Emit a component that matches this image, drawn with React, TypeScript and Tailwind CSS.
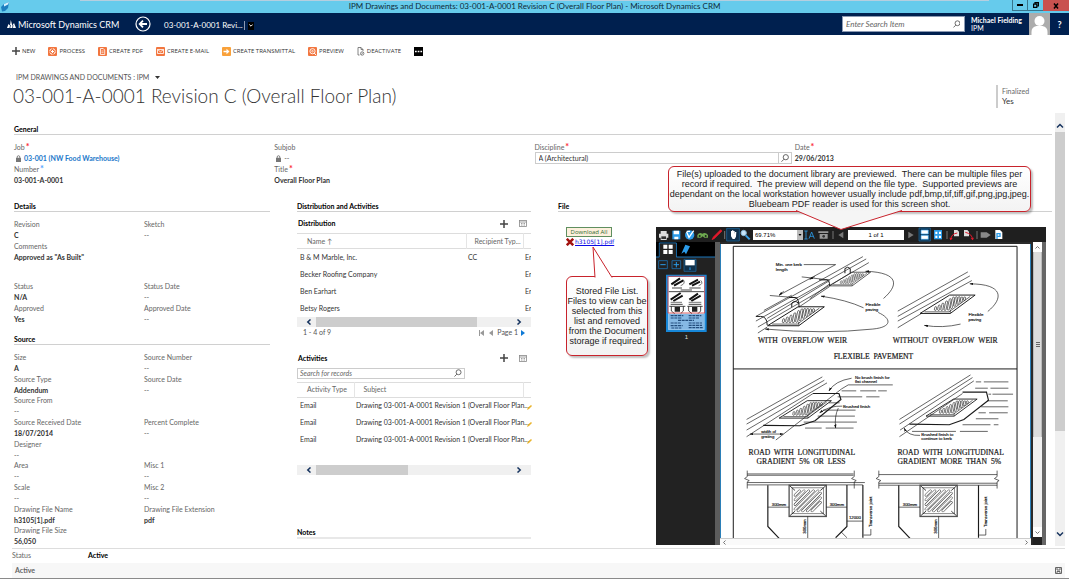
import type { ReactNode } from 'react'

type Field = { label: string; value: string; required?: 'red' | 'blue' } | null

const Icons = {
  plus: (
    <svg width="8" height="8" viewBox="0 0 8 8" stroke="#444" strokeWidth="1.5">
      <path d="M4 0v8M0 4h8" />
    </svg>
  ),
  process: (
    <svg width="9" height="9" viewBox="0 0 9 9">
      <rect width="9" height="9" rx="1" fill="#f2763f" />
      <circle cx="4.5" cy="4.5" r="2.8" fill="none" stroke="#fff" strokeWidth="1" strokeDasharray="3.2 1.2" />
      <path d="M4.5 3v3M3 4.5h3" stroke="#fff" strokeWidth="1" />
    </svg>
  ),
  pdf: (
    <svg width="9" height="9" viewBox="0 0 9 9" fill="none">
      <rect width="9" height="9" rx="1" fill="#f2763f" />
      <path d="M2.5 1.5h2.7l1.5 1.5v4.5h-4.2z" stroke="#fff" strokeWidth=".8" />
      <path d="M3.5 4h2M3.5 5.7h2" stroke="#fff" strokeWidth=".7" />
    </svg>
  ),
  mail: (
    <svg width="9" height="9" viewBox="0 0 9 9" fill="none">
      <rect width="9" height="9" rx="1" fill="#f2763f" />
      <path d="M1.5 2.5h6v4h-6zl3 2.4 3-2.4" stroke="#fff" strokeWidth=".8" />
    </svg>
  ),
  transmittal: (
    <svg width="9" height="9" viewBox="0 0 9 9">
      <rect width="9" height="9" rx="1" fill="#f9a13a" />
      <path d="M1.5 3.7h3v-2l3 2.8-3 2.8v-2h-3z" fill="#fff" />
    </svg>
  ),
  preview: (
    <svg width="9" height="9" viewBox="0 0 9 9" fill="none" stroke="#fff">
      <rect width="9" height="9" rx="1" fill="#f2763f" stroke="none" />
      <circle cx="4.5" cy="4.2" r="2.6" strokeWidth=".9" />
      <circle cx="4.5" cy="4.2" r=".8" strokeWidth=".7" />
      <path d="M6.2 6l2 2.2" strokeWidth="1" />
    </svg>
  ),
  deactivate: (
    <svg width="8" height="9" viewBox="0 0 8 9" fill="none" stroke="#666" strokeWidth=".8">
      <path d="M2.5 8h-1.5v-7.5h3l2 2v1.5" />
      <path d="M4 .5v2h2" />
      <circle cx="5.2" cy="6.5" r="1.7" />
      <path d="M4 7.7l2.4-2.4" />
    </svg>
  ),
  more: (
    <svg width="9" height="9" viewBox="0 0 9 9">
      <rect width="9" height="9" />
      <path d="M1 4.5h1.7M3.7 4.5h1.7M6.4 4.5h1.7" stroke="#fff" strokeWidth="1.7" />
    </svg>
  ),
  search: (
    <svg width="8" height="8" viewBox="0 0 8 8" fill="none" stroke="#555" strokeWidth=".9">
      <circle cx="4.8" cy="3.2" r="2.6" />
      <path d="M3 5.2L.5 7.7" />
    </svg>
  ),
  lock: (
    <svg width="5" height="7" viewBox="0 0 5 7">
      <path d="M1.2 3v-1a1.3 1.3 0 0 1 2.6 0v1" fill="none" stroke="#777" strokeWidth=".9" />
      <rect y="2.8" width="5" height="4.2" fill="#777" />
    </svg>
  ),
  grid: (
    <svg width="8" height="7" viewBox="0 0 8 7" fill="none" stroke="#888" strokeWidth=".8">
      <rect x=".5" y=".5" width="7" height="6" />
      <path d="M.5 2h7M2 3.5h1.5M4.5 3.5h1.5M2 5h1.5M4.5 5h1.5" />
    </svg>
  ),
  left: (
    <svg width="6" height="6" viewBox="0 0 6 6" fill="none" stroke="#17345f" strokeWidth="1.5">
      <path d="M4.5.5L1.8 3l2.7 2.5" />
    </svg>
  ),
  right: (
    <svg width="6" height="6" viewBox="0 0 6 6" fill="none" stroke="#17345f" strokeWidth="1.5">
      <path d="M1.5.5L4.2 3 1.5 5.5" />
    </svg>
  ),
  up: (
    <svg width="8" height="6" viewBox="0 0 8 6" fill="none" stroke="#17345f" strokeWidth="1.5">
      <path d="M1 4.5l3-3 3 3" />
    </svg>
  ),
  down: (
    <svg width="8" height="6" viewBox="0 0 8 6" fill="none" stroke="#17345f" strokeWidth="1.5">
      <path d="M1 1.5l3 3 3-3" />
    </svg>
  ),
  pencil: (
    <svg width="5" height="5" viewBox="0 0 5 5">
      <path d="M0 5l.8-2.3L4 0l1 1-3 3z" fill="#eab42c" />
    </svg>
  ),
}

const commands: Array<{ label: string; icon: ReactNode }> = [
  { label: 'NEW', icon: Icons.plus },
  { label: 'PROCESS', icon: Icons.process },
  { label: 'CREATE PDF', icon: Icons.pdf },
  { label: 'CREATE E-MAIL', icon: Icons.mail },
  { label: 'CREATE TRANSMITTAL', icon: Icons.transmittal },
  { label: 'PREVIEW', icon: Icons.preview },
  { label: 'DEACTIVATE', icon: Icons.deactivate },
]

const detailsTop: Field[] = [{ label: 'Revision', value: 'C' }, { label: 'Sketch', value: '--' }, { label: 'Comments', value: 'Approved as "As Built"' }, null]

const detailsBottom: Field[] = [
  { label: 'Status', value: 'N/A' },
  { label: 'Status Date', value: '--' },
  { label: 'Approved', value: 'Yes' },
  { label: 'Approved Date', value: '--' },
]

const source: Field[] = [
  { label: 'Size', value: 'A' },
  { label: 'Source Number', value: '--' },
  { label: 'Source Type', value: 'Addendum' },
  { label: 'Source Date', value: '--' },
  { label: 'Source From', value: '--' },
  null,
  { label: 'Source Received Date', value: '18/07/2014' },
  { label: 'Percent Complete', value: '--' },
  { label: 'Designer', value: '--' },
  null,
  { label: 'Area', value: '--' },
  { label: 'Misc 1', value: '--' },
  { label: 'Scale', value: '--' },
  { label: 'Misc 2', value: '--' },
  { label: 'Drawing File Name', value: 'h3105[1].pdf' },
  { label: 'Drawing File Extension', value: 'pdf' },
  { label: 'Drawing File Size', value: '56,050' },
]

const recipients = [
  { name: 'B & M Marble, Inc.', type: 'CC' },
  { name: 'Becker Roofing Company', type: '' },
  { name: 'Ben Earhart', type: '' },
  { name: 'Betsy Rogers', type: '' },
]

const activities = [1, 2, 3]

function Required({ color }: { color?: 'red' | 'blue' }) {
  if (!color) return null
  return <span className={`ml-px h-[8px] text-[9px] font-bold leading-[9px] ${color === 'red' ? 'text-red-500' : 'text-blue-400'}`}>*</span>
}

function FieldView({ field, icon, link }: { field: Field; icon?: ReactNode; link?: boolean }) {
  if (!field) return <div />
  const empty = field.value === '--'
  return (
    <dl className="whitespace-nowrap leading-[11px]">
      <dt className="flex h-[11px] text-[#666]">
        {field.label}
        <Required color={field.required} />
      </dt>
      <dd className={`flex h-[11px] items-center gap-[3px] ${empty ? 'text-[#555]' : 'font-bold text-[#333]'}`}>
        {icon && <span className="ml-[2px]">{icon}</span>}
        {link ? <a href="#job" className="text-[#2277c9]">{field.value}</a> : field.value}
      </dd>
    </dl>
  )
}

function SectionTitle({ children }: { children: ReactNode }) {
  return <h2 className="h-[12px] border-b border-[#d0d0d0] font-bold leading-[13px] text-black">{children}</h2>
}

function GridTitle({ children }: { children: string }) {
  return (
    <div className="flex h-[21px] items-center pl-px pt-[2px]">
      <h3 className="flex-1 font-bold text-black">{children}</h3>
      <button aria-label={`Add ${children}`} className="mr-[11px]">{Icons.plus}</button>
      <button aria-label={`Open ${children} list`} className="mr-[4px]">{Icons.grid}</button>
    </div>
  )
}

function HorizontalScroll({ thumb }: { thumb: string }) {
  return (
    <div className="flex h-[10px] items-center bg-[#f0f0f0]">
      <span className="flex w-[19px] justify-center pl-[5px]">{Icons.left}</span>
      <span className={`h-full bg-[#cdcdcd] ${thumb}`} />
      <span className="flex flex-1 justify-end pr-[9px]">{Icons.right}</span>
    </div>
  )
}

function TitleBar() {
  return (
    <header className="flex h-[13px] items-center bg-[#66cbec] text-[8px] leading-[11px] text-[#0f2a38]">
      <svg width="12" height="11" viewBox="0 0 12 11" className="w-[80px]" preserveAspectRatio="xMinYMid">
        <path d="M1 6l3-3 5-2-1 6-3 3-3 .5z" fill="#1d7fc0" />
        <path d="M4 3l5-2-1 2.5-4 2z" fill="#d6f1ff" />
      </svg>
      <p className="h-full flex-1 border-t border-[#b5cfe0] text-center">
        IPM Drawings and Documents: 03-001-A-0001 Revision C (Overall Floor Plan) - Microsoft Dynamics CRM
      </p>
      <div className="flex self-start">
        <span className="w-[23px]" />
        <button aria-label="Minimize" className="flex h-[11px] w-[16px] items-center justify-center border border-t-0 border-[#38758c]">
          <span className="h-[2px] w-[6px] bg-black" />
        </button>
        <button aria-label="Restore" className="flex h-[11px] w-[15px] items-center justify-center border-b border-[#38758c]">
          <svg width="6" height="6" viewBox="0 0 6 6" fill="none" stroke="#000" strokeWidth="1.2">
            <path d="M.6 2.2h3.2v3.2H.6zM2 2V.6h3.4v3.4H4" />
          </svg>
        </button>
        <button aria-label="Close" className="flex h-[11px] w-[26px] items-center justify-center bg-[#c9514f]">
          <svg width="6" height="6" viewBox="0 0 6 6" stroke="#000" strokeWidth="1.5">
            <path d="M1 .5l4 5M5 .5l-4 5" />
          </svg>
        </button>
      </div>
    </header>
  )
}

function NavBar() {
  return (
    <nav className="flex h-[22px] items-center bg-[#00204f] pl-[7px] text-white">
      <svg width="9" height="8" viewBox="0 0 9 8" fill="#fff">
        <path d="M0 8l1.5-4 1.5 1.5.8-5.5 1.5 5.5L7 3l2 5z" />
        <path d="M2.8 8l.8-3M5.5 8l.5-3" stroke="#00204f" strokeWidth=".7" />
      </svg>
      <span className="ml-[2px] w-[117px] text-[9px]">Microsoft Dynamics CRM</span>
      <button aria-label="Back">
        <svg width="16" height="16" viewBox="0 0 16 16" fill="none" stroke="#fff">
          <circle cx="8" cy="8" r="7" strokeWidth="1.2" />
          <path d="M12 8H5M8 4.7L4.7 8 8 11.3" strokeWidth="1.8" />
        </svg>
      </button>
      <span className="ml-[13px] w-[80px] whitespace-nowrap pt-[2px] text-[8px]">03-001-A-0001 Revi...</span>
      <span className="mt-[3px] h-[9px] w-px bg-[#8c9ab3]" />
      <button aria-label="Records" className="ml-[3px] mt-[3px] flex h-[8px] w-[6px] items-center justify-center bg-black">
        <svg width="4" height="3" viewBox="0 0 4 3" fill="none" stroke="#fff"><path d="M.3.5L2 2.2 3.7.5" /></svg>
      </button>
      <div className="ml-auto flex h-[16px] w-[123px] items-center border border-[#8c9ab3] bg-white pr-[4px]">
        <input aria-label="Enter Search Item" placeholder="Enter Search Item" className="w-full min-w-0 pl-[3px] text-[8px] italic outline-none placeholder:text-[#666]" />
        {Icons.search}
      </div>
      <div className="ml-[6px] w-[58px] leading-[8px]">
        <p className="font-bold">Michael Fielding</p>
        <p>IPM</p>
      </div>
      <svg width="21" height="22" viewBox="0 0 21 22">
        <rect width="21" height="22" fill="#acacac" />
        <circle cx="10.5" cy="8" r="5" fill="#fff" />
        <path d="M2.5 22v-3q0-5 5-6h6q5 1 5 6v3z" fill="#fff" />
      </svg>
      <button aria-label="Help" className="w-[19px] text-center text-[9px] font-bold">?</button>
    </nav>
  )
}

function Distribution() {
  return (
    <section>
      <GridTitle>Distribution</GridTitle>
      <table className="w-full table-fixed border-collapse whitespace-nowrap text-left text-[#333]">
        <thead>
          <tr className="h-[15px] border-y border-[#ddd] text-[#666]">
            <th className="pl-[10px] font-normal">Name ↑</th>
            <th className="w-[57px] border-x border-[#e5e5e5] pl-[8px] font-normal">Recipient Typ...</th>
            <th className="w-[8px]" aria-label="Method" />
          </tr>
        </thead>
        <tbody>
          {recipients.map(({ name, type }) => (
            <tr key={name} className="h-[17px]">
              <td className="pl-[3px]">{name}</td>
              <td className="pl-[2px]">{type}</td>
              <td className="overflow-hidden pl-[2px]">Er</td>
            </tr>
          ))}
        </tbody>
      </table>
      <HorizontalScroll thumb="w-[161px]" />
      <div className="flex h-[12px] items-center pl-[6px] pr-[6px] text-[#555]">
        <span className="flex-1">1 - 4 of 9</span>
        <span className="flex items-center gap-[3px]">
          <svg width="16" height="6" viewBox="0 0 16 6" fill="#999">
            <path d="M1 0h1v6h-1zM6 0v6l-4-3zM15 0v6l-4-3z" />
          </svg>
          Page 1
          <svg width="4" height="6" viewBox="0 0 4 6" fill="#0f7ad6"><path d="M0 0v6l4-3z" /></svg>
        </span>
      </div>
    </section>
  )
}

function Activities() {
  return (
    <section className="mt-[8px]">
      <GridTitle>Activities</GridTitle>
      <div className="flex h-[11px] w-[168px] items-center border border-[#ccc] pr-[2px]">
        <input aria-label="Search for records" placeholder="Search for records" className="w-full min-w-0 pl-[2px] italic outline-none placeholder:text-[#666]" />
        {Icons.search}
      </div>
      <table className="mt-[3px] w-full table-fixed border-collapse whitespace-nowrap text-left text-[#333]">
        <thead>
          <tr className="h-[15px] border-y border-[#ddd] text-[#666]">
            <th className="w-[57px] border-r border-[#e5e5e5] pl-[10px] font-normal">Activity Type</th>
            <th className="border-r border-[#e5e5e5] pl-[9px] font-normal">Subject</th>
            <th className="w-[8px]" aria-label="Edit" />
          </tr>
        </thead>
        <tbody>
          {activities.map(id => (
            <tr key={id} className="h-[17px]">
              <td className="pl-[3px]">Email</td>
              <td className="pl-[2px]">Drawing 03-001-A-0001 Revision 1 (Overall Floor Plan...</td>
              <td className="pl-[4px] pt-[4px]">{Icons.pencil}</td>
            </tr>
          ))}
        </tbody>
      </table>
      <div className="mt-[17px]">
        <HorizontalScroll thumb="w-[92px]" />
      </div>
    </section>
  )
}

// Slotted kerb grate seen in perspective, origin at its front left corner
function Grate({ x, y, scale = 1 }: { x: number; y: number; scale?: number }) {
  // x, bottom and height of each slot
  const slots = [
    [44, -10, 12],
    [54, -10, 17],
    [64, -10, 23],
    [74, -10, 30],
    [84, -11, 36],
    [94, -16, 36],
    [104, -23, 30],
    [114, -29, 24],
    [124, -35, 17],
    [134, -41, 11],
  ]
  return (
    <g transform={`translate(${x} ${y}) scale(${scale})`}>
      <path d="M0 0H94L171 -57H92z" strokeWidth="3" />
      <path d="M14 -5H90L156 -53M94 0V-12" strokeWidth="2" />
      {slots.map(([sx, sy, h]) => (
        <rect key={sx} x={sx} y={sy - h} width="6" height={h} rx="3" transform={`rotate(12 ${sx} ${sy})`} strokeWidth="1.8" />
      ))}
    </g>
  )
}

// The same grate in plan view, with its gully and joint lines
function PlanGrate({ x }: { x: number }) {
  const slots = [48, 62, 76, 90, 104, 118, 132, 146]
  return (
    <g transform={`translate(${x} 798)`}>
      <rect width="112" height="94" strokeWidth="4" stroke="#555" />
      <rect x="9" y="8" width="94" height="78" strokeWidth="1.5" />
      <path d="M2 2l16 14M110 2L94 16M2 92l16-14M110 92L94 78" strokeWidth="2.5" />
      {slots.map(c => {
        const x1 = Math.max(18, c - 77)
        const x2 = Math.min(94, c - 17)
        return (
          <g key={c} strokeLinecap="round">
            <path d={`M${x1} ${c - x1}L${x2} ${c - x2}`} strokeWidth="8" stroke="#333" />
            <path d={`M${x1} ${c - x1}L${x2} ${c - x2}`} strokeWidth="5" stroke="#fff" />
          </g>
        )
      })}
      <path d="M-64 0V124L-30 160" strokeWidth="3.5" />
      <path d="M-64 66H0M56 94V160" />
    </g>
  )
}

function PageDrawing() {
  return (
    <svg viewBox="-27 72 930 882" preserveAspectRatio="xMinYMin meet" className="block h-[294px] w-full bg-white" fill="none" stroke="#1a1a1a" strokeWidth="2" role="img" aria-label="Kerb grate details">
      <defs>
        <marker id="tip" viewBox="0 0 10 6" refX="9" refY="3" markerWidth="6" markerHeight="4" orient="auto-start-reverse">
          <path d="M0 0l10 3-10 3z" fill="#111" stroke="none" />
        </marker>
      </defs>
      <path d="M10 960V79H864V960M10 448H864" strokeWidth="3" />

      {/* With overflow weir */}
      <path d="M78 290L400 110M78 304L410 117M84 322L418 128M84 340L112 322M207 262L300 200M240 237L300 192M112 296L300 182M102 272L186 226" />
      <path d="M78 290H92Q112 290 112 316M178 233H196Q208 236 208 262M186 262V250Q196 240 206 250M268 180H292Q300 182 300 198M346 160V146Q354 138 362 146V160" strokeWidth="3" />
      <path d="M222 134H318L148 226M120 227L204 234M216 171L298 180" />
      <path d="M148 226L162 214" markerStart="url(#tip)" />
      <path d="M240 178L256 170" markerStart="url(#tip)" />
      <Grate x={113} y={318} />
      <Grate x={300} y={198} scale={0.72} />
      <path d="M462 236C504 200 516 158 408 154" markerEnd="url(#tip)" />
      <path d="M402 264Q350 240 274 229" markerEnd="url(#tip)" />
      <path d="M446 278C486 296 490 322 430 328Q280 344 106 328" markerEnd="url(#tip)" />

      {/* Without overflow weir */}
      <path d="M505 274L716 156M505 290L722 168M505 304L728 182M505 324L578 280" />
      <Grate x={572} y={281} scale={0.97} />
      <path d="M776 275C824 236 824 192 722 192" markerEnd="url(#tip)" />
      <path d="M694 313Q640 326 585 317" markerEnd="url(#tip)" />

      {/* Gradient 5% or less */}
      <path d="M50 600L278 472M50 614L284 482M50 632L292 490M50 652L250 522M138 662L336 508L356 496H490" />
      <path d="M100 618L210 619L256 604L334 540L328 522H250" strokeWidth="3.5" />
      <path d="M336 514H380M392 514H440M446 514H472M324 532H398M410 532H450M298 550H330M280 572H378M264 590H376M222 608H382M226 626H276M288 626H372" />
      <Grate x={148} y={596} scale={0.92} />
      <path d="M366 476Q316 484 298 514" markerEnd="url(#tip)" />
      <path d="M338 560Q300 558 270 580" markerEnd="url(#tip)" />
      <path d="M326 566Q314 590 318 626" markerEnd="url(#tip)" />
      <path d="M60 644H160" markerStart="url(#tip)" markerEnd="url(#tip)" />

      {/* Gradient more than 5% */}
      <path d="M510 600L724 466M510 614L730 474M512 632L734 484M510 652L700 522" />
      <path d="M540 614L660 616L704 600L778 542L772 518H700" strokeWidth="3.5" />
      <path d="M740 487H756M764 487H838M738 506H776M784 506H838M778 524H786M790 524H852M774 544H836M756 562H838M748 580H770M780 580H836M740 598H808M700 616H784M794 616H808M548 636H680M692 636H776" />
      <Grate x={590} y={590} scale={0.9} />
      <path d="M572 648Q536 650 524 626" markerEnd="url(#tip)" />

      {/* Plan views */}
      <path d="M52 764H372M52 768H372M52 790H406M52 797H400M448 766H804M448 792H804M448 798H804" />
      <path d="M52 754V772l-8 6 14 6-6 4V808M374 754V772l-8 6 14 6-6 4V808M448 754V772l-8 6 14 6-6 4V808M804 754V772l-8 6 14 6-6 4V808" />
      <PlanGrate x={178} />
      <PlanGrate x={572} />
      <path d="M352 797V922L318 956M400 797V956M748 798V956" strokeWidth="3.5" />
      <path d="M290 864H352M352 906H400M334 938l18 18M402 948H424V930M750 948H770V930" />

      <g fill="#1a1a1a" strokeWidth=".6" className="font-['Liberation_Serif',serif]" fontSize="23">
        <text x="84" y="370">{'WITH\u00a0 OVERFLOW\u00a0 WEIR'}</text>
        <text x="490" y="370">{'WITHOUT\u00a0 OVERFLOW\u00a0 WEIR'}</text>
        <text x="312" y="418">{'FLEXIBLE\u00a0 PAVEMENT'}</text>
        <text x="56" y="706">{'ROAD\u00a0 WITH\u00a0 LONGITUDINAL'}</text>
        <text x="80" y="734">{'GRADIENT\u00a0 5%\u00a0 OR\u00a0 LESS'}</text>
        <text x="504" y="706">{'ROAD\u00a0 WITH\u00a0 LONGITUDINAL'}</text>
        <text x="504" y="734">{'GRADIENT\u00a0 MORE\u00a0 THAN\u00a0 5%'}</text>
      </g>
      <g fill="#111" strokeWidth=".5" className="font-['Liberation_Sans',sans-serif]" fontSize="13">
        <text x="138" y="138">Min. one kerb</text>
        <text x="138" y="152">length</text>
        <text x="408" y="260">Flexible</text>
        <text x="408" y="273">paving</text>
        <text x="718" y="290">Flexible</text>
        <text x="718" y="303">paving</text>
        <text x="376" y="478">No brush finish for</text>
        <text x="376" y="491">flat channel</text>
        <text x="340" y="567">Brushed finish</text>
        <text x="94" y="641">width of</text>
        <text x="94" y="656">grating</text>
        <text x="576" y="650">Brushed finish to</text>
        <text x="576" y="663">continue to kerb</text>
        <text x="126" y="862">300mm</text>
        <text x="300" y="862">300mm</text>
        <text x="520" y="862">300mm</text>
        <text x="358" y="900">12000</text>
        <text transform="translate(230 944) rotate(-90)">300mm</text>
        <text transform="translate(624 944) rotate(-90)">300mm</text>
        <text transform="translate(428 924) rotate(-90)">Transverse joint</text>
        <text transform="translate(774 924) rotate(-90)">Transverse joint</text>
      </g>
    </svg>
  )
}

function ViewerToolbar() {
  return (
    <div className="flex h-[15px] items-center bg-[#1f1f1f] text-black">
      <svg width="75" height="15" viewBox="0 0 225 45">
        <path d="M14 12h18v8h-18zM9 20h28v12h-5v7h-18v-7h-5z" fill="#ddd" />
        <path d="M16 28h14v8h-14z" fill="#333" />
        <path d="M49 11h24v26h-24z" fill="#2b9be8" />
        <path d="M53 11h16v11h-16zM55 29h12v8h-12z" fill="#fff" />
        <circle cx="101" cy="24" r="14" fill="#2b9be8" />
        <path d="M92 15l7 16 14-20M92 13h10" stroke="#fff" strokeWidth="4" fill="none" />
        <path d="M124 24q6-9 15-4 10-5 17 4v8h-11l-5-4-5 4h-11z" fill="#6da84f" />
        <circle cx="131" cy="27" r="3" fill="#1f1f1f" />
        <circle cx="149" cy="27" r="3" fill="#1f1f1f" />
        <path d="M168 38l4-8 22-22 4 4-22 22z" fill="#e3182b" stroke="#e3182b" strokeWidth="2" />
        <path d="M206 12v24" stroke="#777" strokeWidth="3" />
        <path d="M226 4h-14v38h14" fill="#10304a" stroke="#1d6fae" strokeWidth="2" />
      </svg>
      <svg width="22" height="15" viewBox="0 0 66 45">
        <path d="M0 4h25v38H0" fill="#10304a" stroke="#1d6fae" strokeWidth="2" />
        <path d="M5 36l-5-8V12h3v8-10h4v10-8h4v9l1-6h4l-1 14-4 7z" fill="#fff" />
        <circle cx="38" cy="18" r="8" fill="#c9e6fa" stroke="#88b5d2" strokeWidth="3" />
        <path d="M44 25l12 12" stroke="#3aa0e6" strokeWidth="6" />
      </svg>
      <select aria-label="Zoom" className="h-[10px] w-[44px] appearance-none bg-white pl-[2px] font-['Liberation_Sans',sans-serif] text-[6px] leading-[10px]">
        <option>69.71%</option>
      </select>
      <svg width="6" height="10" viewBox="0 0 6 10"><path d="M0 0h6v10h-6z" fill="#bbb" /><path d="M1.5 4h3l-1.5 2z" /></svg>
      <svg width="45" height="15" viewBox="0 0 135 45">
        <path d="M4 12h10M9 12v24M4 36h10" stroke="#2b9be8" strokeWidth="2.5" />
        <path d="M18 35l8-20 8 20M21 28h10" stroke="#2b9be8" strokeWidth="2.5" fill="none" />
        <path d="M46 13h30v5h-30zM50 21h24v14h-24z" fill="#999" />
        <circle cx="62" cy="28" r="4" fill="#333" />
        <path d="M90 12v24" stroke="#777" strokeWidth="3" />
        <path d="M121 14v20l-15-10z" fill="#777" />
      </svg>
      <input aria-label="Page" defaultValue="1 of 1" className="h-[10px] min-w-0 max-w-[56px] flex-1 bg-white text-center font-['Liberation_Sans',sans-serif] text-[6px]" />
      <svg width="100" height="15" viewBox="0 0 300 45">
        <path d="M13 14v20l16-10z" fill="#777" />
        <path d="M45 3h34v39h-34z" fill="#10304a" stroke="#1d6fae" strokeWidth="2" />
        <path d="M51 9h22v12h-22zM51 25h22v12h-22z" fill="#fff" stroke="#2b9be8" strokeWidth="2" />
        <path d="M90 9h24v28h-24z" fill="#2b9be8" />
        <path d="M94 14h6v7h-6zM105 14h6v7h-6zM94 26h6v7h-6zM105 26h6v7h-6z" fill="#fff" />
        <path d="M129 12v24" stroke="#777" strokeWidth="3" />
        <path d="M150 9h10l5 5v14h-15zM180 9h10l5 5v14h-15z" fill="#ddd" />
        <path d="M140 38q2-18 20-20M206 38q-2-18-22-22" stroke="#e3182b" strokeWidth="3" fill="none" />
        <path d="M136 32l4 8 6-6zM210 32l-4 8-6-6z" fill="#e3182b" />
        <path d="M219 12v24" stroke="#777" strokeWidth="3" />
        <path d="M230 16h18l12 8-12 8h-18z" fill="#888" />
        <path d="M274 9h14l7 7v20h-21z" fill="#fff" />
        <path d="M279 36V20h9v8h-9" stroke="#2b9be8" strokeWidth="4" fill="none" />
      </svg>
    </div>
  )
}

function ThumbnailPane() {
  return (
    <aside className="flex w-[59px] flex-col bg-[#222]">
      <svg width="59" height="31" viewBox="0 0 177 93">
        <path d="M0 0h177v45h-177z" fill="#000" />
        <path d="M0 45h10V3h51v42h116" fill="#222" stroke="#1d8be0" strokeWidth="2.5" />
        <path d="M11 5h49v42h-49z" fill="#222" />
        <path d="M22 8h12v12h-12zM38 8h12v12h-12zM22 24h12v12h-12zM38 24h12v12h-12z" fill="#fff" />
        <path d="M88 8l14 5-12 24-5-8-9 6z" fill="#2b9be8" />
        <path d="M8 56h26v24h-26zM48 56h26v24h-26z" fill="none" stroke="#1d6fae" strokeWidth="2.5" />
        <path d="M13 68h16M53 68h16M61 60v16" stroke="#2b9be8" strokeWidth="3" />
        <path d="M84 52h36v36h-36z" fill="#10304a" stroke="#1d6fae" strokeWidth="2" />
        <path d="M88 54h28v16h-28z" fill="#fff" />
        <path d="M102 76v8" stroke="#2b9be8" strokeWidth="3" />
      </svg>
      <svg width="59" height="72" viewBox="0 0 177 216" fill="none">
        <path d="M30 5h122v172h-122z" fill="#1787d8" />
        <path d="M37 12h108v158h-108z" fill="#fff" />
        <path d="M37 122h108v48h-108z" fill="#86b9e4" />
        <path d="M46 34l26-18M54 38l28-16M100 34l26-14M108 38l24-12M44 80l30-20M52 84l28-16M100 80l26-18M106 84l28-16" stroke="#111" strokeWidth="6" />
        <path d="M74 38q16-6 8-18M128 38q16-6 6-16M44 88h34M98 88h38" stroke="#333" strokeWidth="2" />
        <path d="M56 102h16v14h-16zM108 102h16v14h-16z" fill="#222" />
        <path d="M48 45h30M100 45h34M74 51h34M38 56h106M44 94h36M98 94h38M40 100h48M94 100h46M46 100v14l10 8M82 100v14l-8 8M98 100v14l10 8M134 100v14l-8 8" stroke="#222" strokeWidth="2.5" />
        <path d="M44 128h38M98 128h38M44 135h34M98 135h32M66 142h48M44 150h30M98 150h40M44 158h36M98 157h40M46 165h30M98 164h42" stroke="#234d7c" strokeWidth="3.5" strokeDasharray="9 2" />
        <path d="M36 10h110v110h-110z" stroke="#d44" strokeWidth="2.5" />
        <text x="86" y="198" fontSize="18" fill="#ddd" className="font-['Liberation_Sans',sans-serif]">1</text>
      </svg>
    </aside>
  )
}

function Viewer() {
  return (
    <div className="flex h-[318px] min-w-0 flex-1 flex-col bg-[#2a2a2a]">
      <ViewerToolbar />
      <div className="flex flex-1">
        <ThumbnailPane />
        <div className="w-[5px] bg-[#5c5c5c]" />
        <div className="flex min-w-0 flex-1 flex-col">
          <div className="mt-[2px] border-x border-[#2b7fb8]">
            <PageDrawing />
          </div>
          <div className="flex flex-1 items-center justify-between border-t border-[#ccc] bg-[#fafafa] px-[3px] text-[#777]">
            <svg width="3" height="5" viewBox="0 0 3 5" fill="none" stroke="#777"><path d="M2.5.5l-2 2 2 2" /></svg>
            <svg width="3" height="5" viewBox="0 0 3 5" fill="none" stroke="#777"><path d="M.5.5l2 2-2 2" /></svg>
          </div>
        </div>
        <div className="ml-[2px] flex w-[9px] flex-col bg-[#f0f0f0]">
          <span className="flex h-[10px] items-center justify-center bg-white">
            <svg width="5" height="3" viewBox="0 0 5 3" fill="none" stroke="#777"><path d="M.5 2.5l2-2 2 2" /></svg>
          </span>
          <span className="flex h-[185px] flex-col items-center justify-center gap-px border-x border-[#bbb] bg-[#dcdcdc]">
            <i className="h-px w-[4px] bg-[#666]" />
            <i className="h-px w-[4px] bg-[#666]" />
            <i className="h-px w-[4px] bg-[#666]" />
          </span>
          <span className="mt-auto flex h-[10px] items-center justify-center bg-white">
            <svg width="5" height="3" viewBox="0 0 5 3" fill="none" stroke="#777"><path d="M.5.5l2 2 2-2" /></svg>
          </span>
          <span className="h-[8px] bg-[#222]" />
        </div>
        <div className="w-[4px] bg-[#666]" />
      </div>
    </div>
  )
}

const calloutBox = "rounded-[6px] border border-[#c8232c] bg-gradient-to-b from-white to-[#f3f3f3] text-center font-['Liberation_Sans',sans-serif] text-[9px] leading-[10px] text-[#222] shadow-[2px_2px_2px_rgba(0,0,0,0.25)]"

function FileSection() {
  return (
    <section className="relative">
      <SectionTitle>File</SectionTitle>
      <div className="mr-[6px] mt-[15px] flex">
        <div className="w-[98px] pl-[8px]">
          <button className="block h-[10px] w-[46px] border border-[#5f8f5f] bg-[#fdf0dd] font-['Open_Sans',sans-serif] text-[6px] leading-[8px] text-[#2f6b2f]">Download All</button>
          <div className="flex items-center gap-px">
            <button aria-label="Remove file">
              <svg width="8" height="8" viewBox="0 0 8 8" stroke="#a3120f" strokeWidth="2.5"><path d="M.8.8l6.4 6.4M7.2.8L.8 7.2" /></svg>
            </button>
            <a href="#file" className="font-['DejaVu_Sans',sans-serif] text-[6px] text-[#0a0ae6] underline">h3105[1].pdf</a>
          </div>
        </div>
        <Viewer />
      </div>

      {/* Annotation callouts */}
      <div className={`absolute left-[8px] top-[76px] w-[82px] pb-[9px] pt-[9px] ${calloutBox}`}>
        <p className="whitespace-nowrap">Stored File List.<br />Files to view can be<br />selected from this<br />list and removed<br />from the Document<br />storage if required.</p>
        <svg width="24" height="32" viewBox="0 0 24 32" className="absolute -top-[31px] left-[24px]">
          <path d="M4 31.5L2 1l19 30.5" fill="#fff" stroke="#c8232c" />
        </svg>
      </div>
      <div className={`absolute left-[110px] -top-[34px] w-[363px] py-[2px] ${calloutBox}`}>
        <p className="whitespace-pre">
          File(s) uploaded to the document library are previewed.  There can be multiple files per<br />
          record if required.  The preview will depend on the file type.  Supported previews are<br />
          dependant on the local workstation however usually include pdf,bmp,tif,tiff,gif,png,jpg,jpeg.<br />
          Bluebeam PDF reader is used for this screen shot.
        </p>
        <svg width="108" height="21" viewBox="0 0 108 21" className="absolute left-[126px] top-[43px]">
          <path d="M1 .5L46 19.5 107 .5" fill="#f5f5f5" stroke="#c8232c" />
        </svg>
      </div>
    </section>
  )
}

export default function App() {
  return (
    <div className="flex h-screen flex-col overflow-hidden bg-white font-['Lato',sans-serif] text-[7px] leading-[9px] text-[#333]">
      <TitleBar />
      <NavBar />

      {/* Command bar */}
      <div className="flex h-[32px] items-center gap-[13px] pl-[12px] font-['Open_Sans',sans-serif] text-[6px] text-[#333]">
        {commands.map(({ label, icon }) => (
          <button key={label} className="flex items-center gap-[2px] whitespace-nowrap">
            {icon}
            {label}
          </button>
        ))}
        <button aria-label="More commands">{Icons.more}</button>
      </div>

      {/* Record header */}
      <div className="flex h-[46px] justify-between pl-[13px] pr-[16px]">
        <div className="pt-[6px]">
          <p className="flex items-center gap-[6px] pl-[3px] text-[#555]">
            IPM DRAWINGS AND DOCUMENTS : IPM
            <svg width="5" height="3" viewBox="0 0 5 3" fill="#333"><path d="M0 0h5L2.5 3z" /></svg>
          </p>
          <h1 className="text-[19px] font-light leading-[28px] text-[#333]">03-001-A-0001 Revision C (Overall Floor Plan)</h1>
        </div>
        <dl className="mt-[18px] h-[23px] w-[57px] border-l-2 border-[#ccc] pl-[4px] pt-[2px]">
          <dt className="text-[#666]">Finalized</dt>
          <dd className="text-[8px] leading-[10px]">Yes</dd>
        </dl>
      </div>

      {/* Form */}
      <main className="flex min-h-0 flex-1 pr-[4px]">
        <div className="min-w-0 flex-1 overflow-hidden pl-[14px] pr-[3px] pt-[10px]">
          <SectionTitle>General</SectionTitle>
          <div className="-mr-[3px] mt-[7px] grid h-[44px] grid-cols-4 grid-rows-2">
            <FieldView field={{ label: 'Job', value: '03-001 (NW Food Warehouse)', required: 'red' }} icon={Icons.lock} link />
            <FieldView field={{ label: 'Subjob', value: '--' }} icon={Icons.lock} />
            <div>
              <label htmlFor="discipline" className="flex h-[10px] leading-[11px] text-[#666]">
                Discipline
                <Required color="red" />
              </label>
              <div className="mr-[3px] flex h-[12px] items-center border border-[#ccc]">
                <input id="discipline" defaultValue="A (Architectural)" className="min-w-0 flex-1 pl-[3px] outline-none" />
                <button aria-label="Look up discipline" className="flex h-full w-[13px] items-center justify-center border-l border-[#ccc]">{Icons.search}</button>
              </div>
            </div>
            <FieldView field={{ label: 'Date', value: '29/06/2013', required: 'red' }} />
            <FieldView field={{ label: 'Number', value: '03-001-A-0001', required: 'blue' }} />
            <FieldView field={{ label: 'Title', value: 'Overall Floor Plan', required: 'red' }} />
          </div>

          <div className="mt-[14px] grid grid-cols-[256fr_234fr_494fr] gap-x-[27px]">
            <div>
              <SectionTitle>Details</SectionTitle>
              <div className="mt-[7px] grid h-[44px] grid-cols-[130fr_126fr] grid-rows-2">
                {detailsTop.map((field, i) => <FieldView key={i} field={field} />)}
              </div>
              <div className="mt-[18px] grid h-[44px] grid-cols-[130fr_126fr] grid-rows-2">
                {detailsBottom.map((field, i) => <FieldView key={i} field={field} />)}
              </div>
              <div className="mt-[8px]">
                <SectionTitle>Source</SectionTitle>
              </div>
              <div className="mt-[7px] grid h-[195px] grid-cols-[130fr_126fr] grid-rows-9">
                {source.map((field, i) => <FieldView key={i} field={field} />)}
              </div>
            </div>

            <div className="min-w-0">
              <SectionTitle>Distribution and Activities</SectionTitle>
              <Distribution />
              <Activities />
              <h2 className="mt-[53px] border-b-2 border-[#e8e8e8] font-bold text-black">Notes</h2>
            </div>

            <FileSection />
          </div>
        </div>
        <div className="flex w-[10px] flex-col items-center bg-[#f0f0f0]">
          <span className="flex h-[19px] items-end pb-[3px]">{Icons.up}</span>
          <span className="h-[299px] w-full bg-[#cdcdcd]" />
          <span className="mt-auto pb-[9px]">{Icons.down}</span>
        </div>
      </main>

      {/* Status bar */}
      <footer className="shrink-0 pt-[2px]">
        <div className="mb-[2px] ml-[12px] mr-[4px] flex h-[13px] items-center border-t border-[#ddd]">
          <span className="w-[76px] text-[#666]">Status</span>
          <span className="font-bold text-black">Active</span>
        </div>
        <div className="ml-[12px] mr-[4px] flex h-[15px] items-center justify-between bg-[#f7f7f7] pl-[3px] pr-[3px]">
          <span className="font-bold text-[#666]">Active</span>
          <button aria-label="Save">
            <svg width="7" height="7" viewBox="0 0 7 7" fill="none" stroke="#666"><path d="M.5.5h6v6h-6zM2 .5v2.5h3V.5M2 6.5v-2h3v2" /></svg>
          </button>
        </div>
        <div className="h-px bg-[#8a8a8a]" />
      </footer>
    </div>
  )
}
